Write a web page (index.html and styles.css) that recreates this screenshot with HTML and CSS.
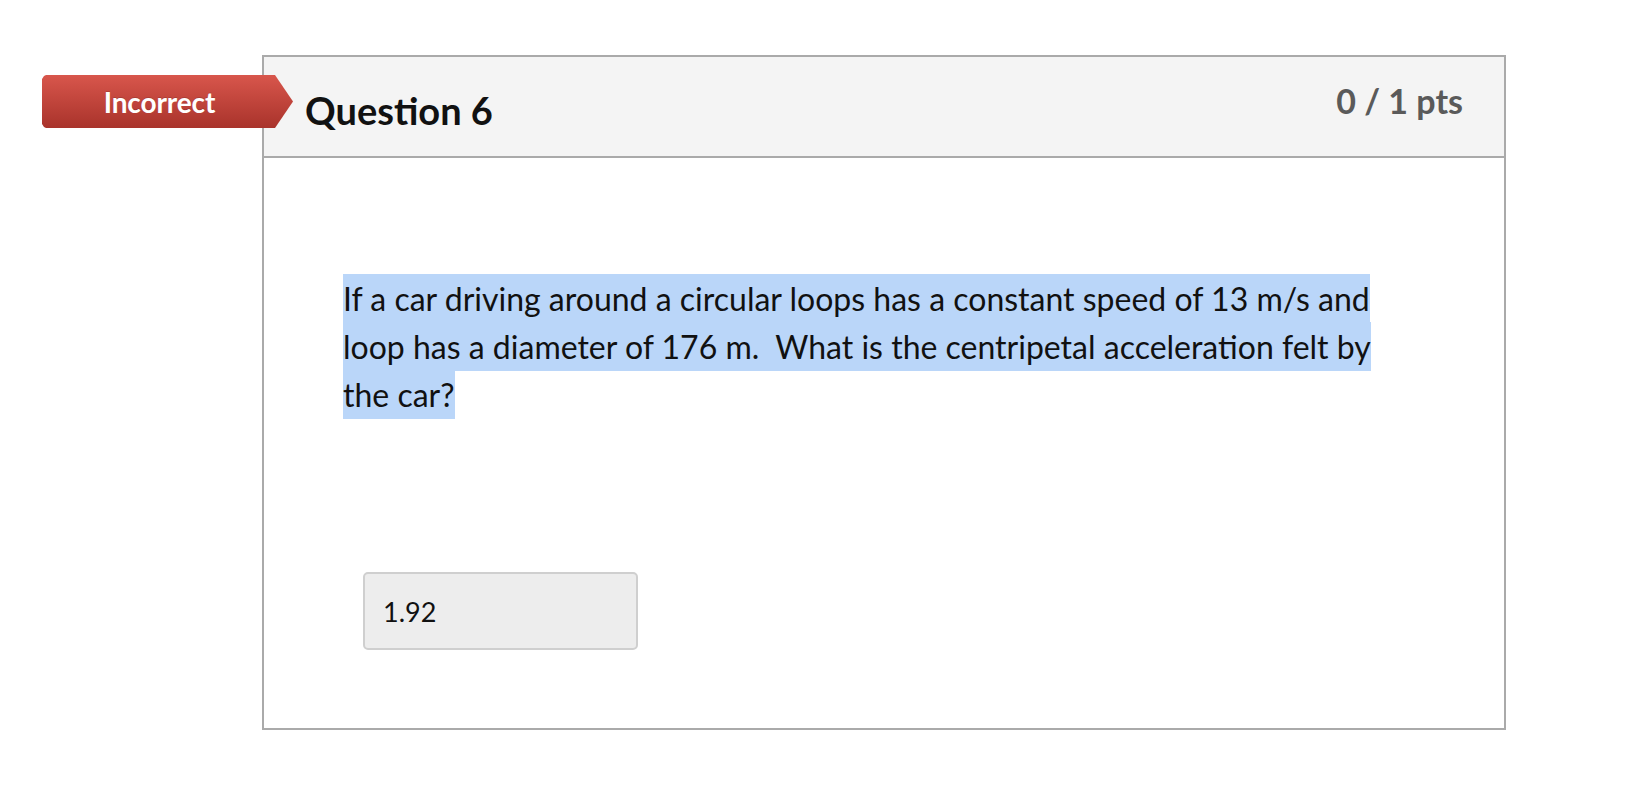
FILE: index.html
```html
<!DOCTYPE html>
<html lang="en">
<head>
<meta charset="utf-8">
<title>Question 6</title>
<link rel="stylesheet" href="styles.css">
</head>
<body>
<div class="quiz">
  <div class="question">
    <div class="badge"><span class="badge-label">Incorrect</span></div>
    <div class="question-header">
      <h2 class="question-title">Question 6</h2>
      <div class="question-points">0 / 1 pts</div>
    </div>
    <div class="question-body">
      <p class="question-text"><span class="selected">If a car driving around a circular loops has a constant speed of 13 m/s and loop has a diameter of 176 m.&nbsp; What is the centripetal acceleration felt by the car?</span></p>
      <div class="answer"><span class="answer-value">1.92</span></div>
    </div>
  </div>
</div>
</body>
</html>
```
FILE: styles.css
```css
html, body {
  margin: 0;
  padding: 0;
  background: #ffffff;
}

body {
  font-family: "Lato", "Liberation Sans", sans-serif;
  color: #111;
}

.quiz {
  padding: 55px 0 40px 262px;
}

.question {
  position: relative;
  width: 1244px;
  box-sizing: border-box;
  border: 2px solid #aaaaaa;
  background: #fff;
}

.badge {
  position: absolute;
  left: -222px;
  top: 18px;
  width: 251px;
  height: 53px;
  display: flex;
  align-items: center;
  box-sizing: border-box;
}

.badge::before {
  content: "";
  position: absolute;
  inset: 0;
  background: linear-gradient(#d8564c, #a9332b);
  clip-path: polygon(0 4px, 2px 1px, 4px 0, 233px 0, 251px 26.5px, 233px 53px, 4px 53px, 2px 52px, 0 49px);
}

.badge-label {
  position: relative;
  width: 233px;
  padding-left: 2px;
  box-sizing: border-box;
  text-align: center;
  color: #fff;
  font-weight: 700;
  font-size: 28px;
  letter-spacing: -0.1px;
  text-shadow: 0 -1px 0 rgba(0,0,0,0.15);
}

.question-header {
  display: flex;
  justify-content: space-between;
  align-items: flex-start;
  height: 99px;
  background: #f4f4f4;
  border-bottom: 2px solid #aaaaaa;
  padding: 0 41px 0 41px;
}

.question-title {
  margin: 0;
  padding-top: 30px;
  font-size: 38px;
  line-height: 46px;
  font-weight: 700;
  color: #111;
}

.question-points {
  padding-top: 24px;
  font-size: 34px;
  line-height: 40px;
  font-weight: 700;
  color: #5a5a5a;
}

.question-body {
  padding: 117px 0 78px 75px;
}

.question-text {
  margin: 0 0 0 4px;
  width: 1060px;
  font-size: 32px;
  line-height: 48px;
  color: #111;
}

.selected {
  background: #bad6f9;
  padding: 5px 0;
}

.answer {
  margin: 153px 0 0 24px;
  width: 275px;
  height: 78px;
  box-sizing: border-box;
  background: #ededed;
  border: 2px solid #cfcfcf;
  border-radius: 5px;
  display: flex;
  align-items: center;
  padding-left: 18px;
}

.answer-value {
  font-size: 27px;
  color: #111;
}
```
